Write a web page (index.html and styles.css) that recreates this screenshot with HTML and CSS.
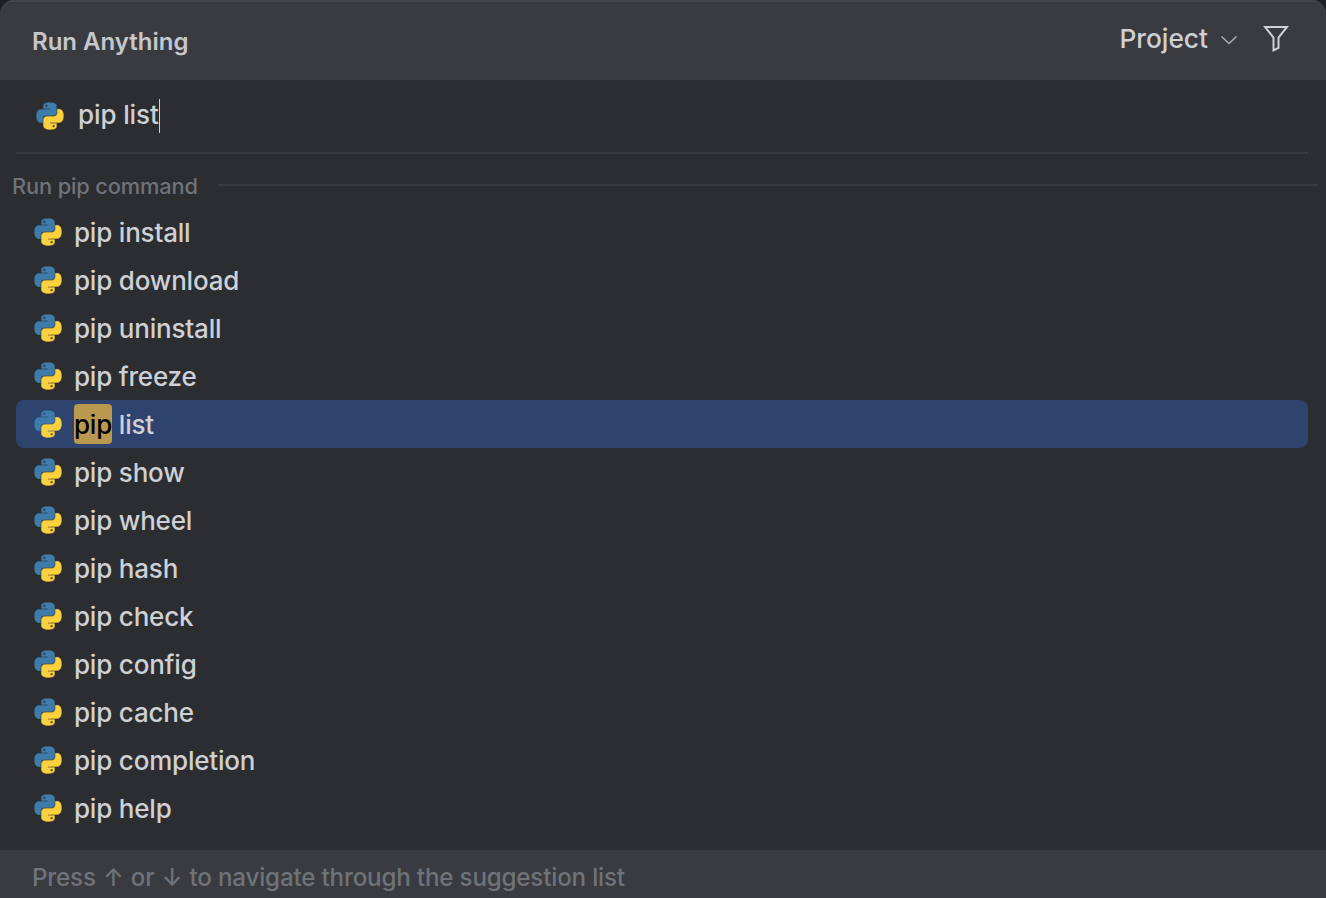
FILE: index.html
```html
<!DOCTYPE html>
<html lang="en">
<head>
<meta charset="utf-8">
<title>Run Anything</title>
<link rel="stylesheet" href="styles.css">
</head>
<body>
<svg class="defs" width="0" height="0" aria-hidden="true">
  <symbol id="py" viewBox="-0.500 -0.500 25 25">
    <path class="py-blue" d="M11.914 0C5.82 0 6.2 2.656 6.2 2.656l.007 2.752h5.814v.826H3.9S0 5.789 0 11.969c0 6.18 3.403 5.96 3.403 5.96h2.03v-2.867s-.109-3.42 3.35-3.42h5.766s3.24.052 3.24-3.148V3.202S18.28 0 11.913 0zM8.708 1.85c.578 0 1.046.47 1.046 1.052 0 .581-.468 1.051-1.046 1.051-.579 0-1.046-.47-1.046-1.051 0-.582.467-1.052 1.046-1.052z"/>
    <path class="py-yellow" d="M12.087 24c6.092 0 5.712-2.656 5.712-2.656l-.007-2.752h-5.814v-.826h8.123s3.9.445 3.9-5.735c0-6.18-3.404-5.96-3.404-5.96h-2.03v2.867s.109 3.42-3.35 3.42H9.45s-3.24-.052-3.24 3.148v5.292S5.995 24 12.087 24zm3.206-1.85c-.578 0-1.046-.47-1.046-1.052 0-.581.468-1.051 1.046-1.051.579 0 1.046.47 1.046 1.051 0 .582-.467 1.052-1.046 1.052z"/>
  </symbol>
</svg>
<div class="window">
  <header class="header">
    <div class="title">Run Anything</div>
    <div class="scope">Project
      <svg class="chev" width="18" height="10" viewBox="0 0 18 10"><path d="M1.500 1.500 9 8.500l7.500-7" fill="none" stroke="#a9abb0" stroke-width="1.600"/></svg>
    </div>
    <svg class="filter" width="26" height="28" viewBox="0 0 26 28"><path d="M2 2h22l-8.500 10.500V23l-5 2.500V12.500Z" fill="none" stroke="#ced0d6" stroke-width="2"/></svg>
  </header>
  <div class="search">
    <svg class="icon"><use href="#py"/></svg>
    <span class="query">pip list</span><span class="caret"></span>
  </div>
  <div class="rule"></div>
  <div class="section"><span>Run pip command</span><i></i></div>
  <ul class="list">
    <li class="row"><svg class="icon"><use href="#py"/></svg><span>pip install</span></li>
    <li class="row"><svg class="icon"><use href="#py"/></svg><span>pip download</span></li>
    <li class="row"><svg class="icon"><use href="#py"/></svg><span>pip uninstall</span></li>
    <li class="row"><svg class="icon"><use href="#py"/></svg><span>pip freeze</span></li>
    <li class="row selected"><svg class="icon"><use href="#py"/></svg><span><mark>pip</mark> list</span></li>
    <li class="row"><svg class="icon"><use href="#py"/></svg><span>pip show</span></li>
    <li class="row"><svg class="icon"><use href="#py"/></svg><span>pip wheel</span></li>
    <li class="row"><svg class="icon"><use href="#py"/></svg><span>pip hash</span></li>
    <li class="row"><svg class="icon"><use href="#py"/></svg><span>pip check</span></li>
    <li class="row"><svg class="icon"><use href="#py"/></svg><span>pip config</span></li>
    <li class="row"><svg class="icon"><use href="#py"/></svg><span>pip cache</span></li>
    <li class="row"><svg class="icon"><use href="#py"/></svg><span>pip completion</span></li>
    <li class="row"><svg class="icon"><use href="#py"/></svg><span>pip help</span></li>
  </ul>
  <footer class="footer"><span>Press <b class="arrow">↑</b> or <b class="arrow">↓</b> to navigate through the suggestion list</span></footer>
</div>
</body>
</html>
```
FILE: styles.css
```css
* { box-sizing: border-box; }
html, body { margin: 0; height: 100%; background: #1e1f22; overflow: hidden; }
.defs { position: absolute; }
.py-blue { fill: #3f7cab; stroke: #3f7cab; stroke-width: 0.400; }
.py-yellow { fill: #fbd13f; stroke: #fbd13f; stroke-width: 0.400; }
.window {
  width: 1326px; height: 898px;
  display: flex; flex-direction: column;
  background: #2b2d30;
  color: #dfe1e5;
  font-family: Inter, "Liberation Sans", sans-serif;
  font-size: 26px;
  font-weight: 450;
  border-radius: 14px 14px 0 0;
  overflow: hidden;
}
.header {
  height: 80px; flex: none;
  display: flex; align-items: center;
  padding: 0 37px 0 32px;
  background: #393b40;
  border-top: 2px solid #45474c;
}
.title { font-weight: 600; font-size: 24px; color: #c5c7cc; flex: 1; }
.scope { display: flex; align-items: center; gap: 12px; color: #ced0d6; margin-right: 25px; margin-top: -5px; font-size: 26.300px; }
.chev { margin-top: 3px; }
.filter { margin-top: -5px; }
.search {
  height: 72px; flex: none;
  display: flex; align-items: center;
  padding: 0 0 3px 36px;
  letter-spacing: -0.120px;
}
.search .icon { margin-right: 14px; margin-top: 3px; }
.query { color: #ced0d6; }
.caret { width: 1.500px; height: 34px; background: #ced0d6; margin-top: 3px; }
.icon { width: 28px; height: 28px; flex: none; }
.rule { height: 2px; margin: 0 18px 0 16px; background: #393b40; flex: none; }
.section {
  height: 54px; flex: none;
  display: flex; align-items: center; gap: 20px;
  padding: 10px 8px 0 12px;
  font-size: 21.800px; color: #6f737a;
  letter-spacing: -0.130px;
}
.section i { flex: 1; height: 2px; background: #393b40; margin-top: -3px; }
.list { list-style: none; margin: 0; padding: 0; flex: 1; }
.row {
  height: 48px; margin: 0 18px 0 16px;
  display: flex; align-items: center; gap: 12px;
  padding-left: 18px;
  border-radius: 8px;
  color: #ced0d6;
  letter-spacing: -0.200px;
}
.selected { background: #2e436e; }
mark { background: #bb9850; color: #000; border-radius: 4px; padding: 5px 0 4px; }
.footer {
  height: 48px; flex: none;
  display: flex; align-items: center;
  padding: 6px 0 0 32px;
  background: #393b40;
  color: #6f737a;
  font-size: 24.200px;
  letter-spacing: -0.190px;
}
.arrow { font-weight: inherit; margin: 0 1px; }
```
